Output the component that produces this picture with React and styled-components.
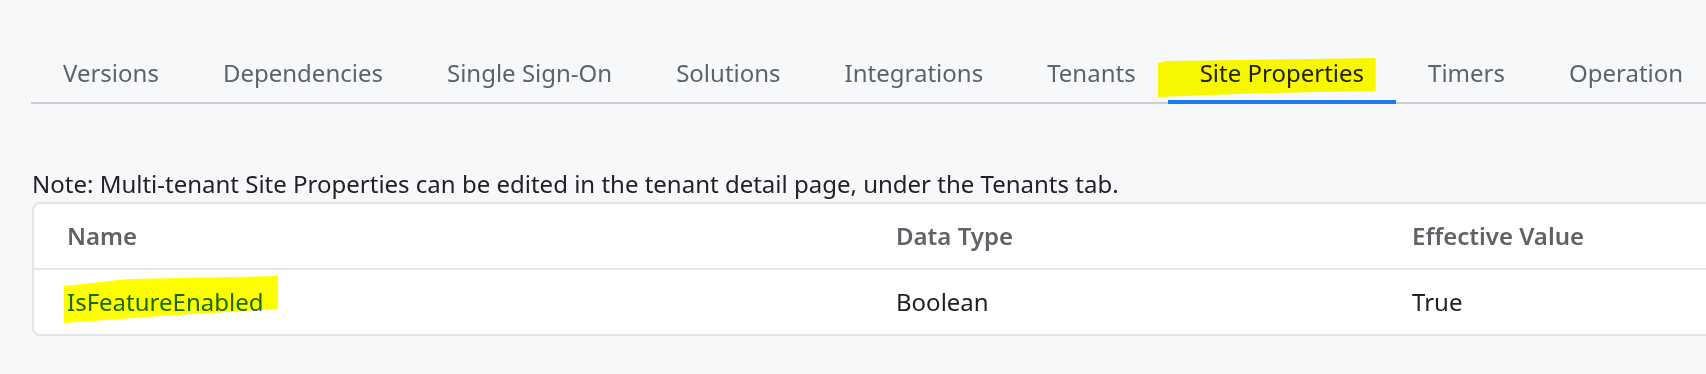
import React from "react";
import styled, { createGlobalStyle } from "styled-components";

const Global = createGlobalStyle`
  html, body {
    margin: 0;
    padding: 0;
    background: #f7f8fa;
    overflow: hidden;
  }
  body {
    font-family: "Noto Sans", "Open Sans", sans-serif;
    -webkit-font-smoothing: antialiased;
  }
`;

const Page = styled.div`
  padding-top: 40px;
  width: 1800px;
`;

const TabList = styled.ul`
  display: flex;
  list-style: none;
  margin: 0 0 0 31px;
  padding: 0;
  border-bottom: 2px solid #cdced1;
`;

const Tab = styled.li`
  position: relative;
  padding: 15px 32px 9px;
  margin-bottom: -2px;
  font-size: 24px;
  line-height: 36px;
  white-space: nowrap;
  color: ${(p) => (p.$active ? "#222326" : "#5f6368")};
  border-bottom: 4px solid ${(p) => (p.$active ? "#1b7cf0" : "transparent")};
`;

const Marker = styled.span`
  position: absolute;
  left: ${(p) => p.$left}px;
  top: ${(p) => p.$top}px;
  width: ${(p) => p.$width}px;
  height: ${(p) => p.$height}px;
  background: #ffff00;
  mix-blend-mode: multiply;
  clip-path: ${(p) => p.$shape};
  pointer-events: none;
`;

const Note = styled.p`
  margin: 62px 0 0 32px;
  font-size: 24px;
  line-height: 36px;
  color: #212225;
`;

const Card = styled.div`
  margin-left: 32px;
  background: #ffffff;
  border: 2px solid #e3e5e8;
  border-radius: 8px;
`;

const Row = styled.div`
  display: grid;
  grid-template-columns: 829px 516px 1fr;
  border-bottom: ${(p) => (p.$head ? "2px solid #e3e5e8" : "none")};
`;

const HeadCell = styled.div`
  padding: 14px 33px;
  font-size: 24px;
  line-height: 36px;
  font-weight: 600;
  color: #5f6368;
`;

const Cell = styled.div`
  padding: 14px 33px;
  font-size: 24px;
  line-height: 36px;
  color: #212225;
`;

const Link = styled.a`
  position: relative;
  color: #1769d6;
  text-decoration: none;
`;

const tabs = [
  "Versions",
  "Dependencies",
  "Single Sign-On",
  "Solutions",
  "Integrations",
  "Tenants",
  "Site Properties",
  "Timers",
  "Operation",
];

export default function App() {
  return (
    <>
      <Global />
      <Page>
        <TabList>
          {tabs.map((t) => (
            <Tab key={t} $active={t === "Site Properties"}>
              {t}
              {t === "Site Properties" && (
                <Marker
                  $left={-10}
                  $top={18}
                  $width={218}
                  $height={39}
                  $shape="polygon(0 5px, 4% 3px, 100% 0, 100% 33px, 50% 35px, 0 100%)"
                />
              )}
            </Tab>
          ))}
        </TabList>
        <Note>
          Note: Multi-tenant Site Properties can be edited in the tenant detail page, under the Tenants tab.
        </Note>
        <Card>
          <Row $head>
            <HeadCell>Name</HeadCell>
            <HeadCell>Data Type</HeadCell>
            <HeadCell>Effective Value</HeadCell>
          </Row>
          <Row>
            <Cell>
              <Link href="#">
                IsFeatureEnabled
                <Marker
                  $left={-3}
                  $top={-9}
                  $width={214}
                  $height={47}
                  $shape="polygon(0 10px, 30% 3px, 100% 0, 100% 33px, 45% 40px, 0 100%)"
                />
              </Link>
            </Cell>
            <Cell>Boolean</Cell>
            <Cell>True</Cell>
          </Row>
        </Card>
      </Page>
    </>
  );
}
